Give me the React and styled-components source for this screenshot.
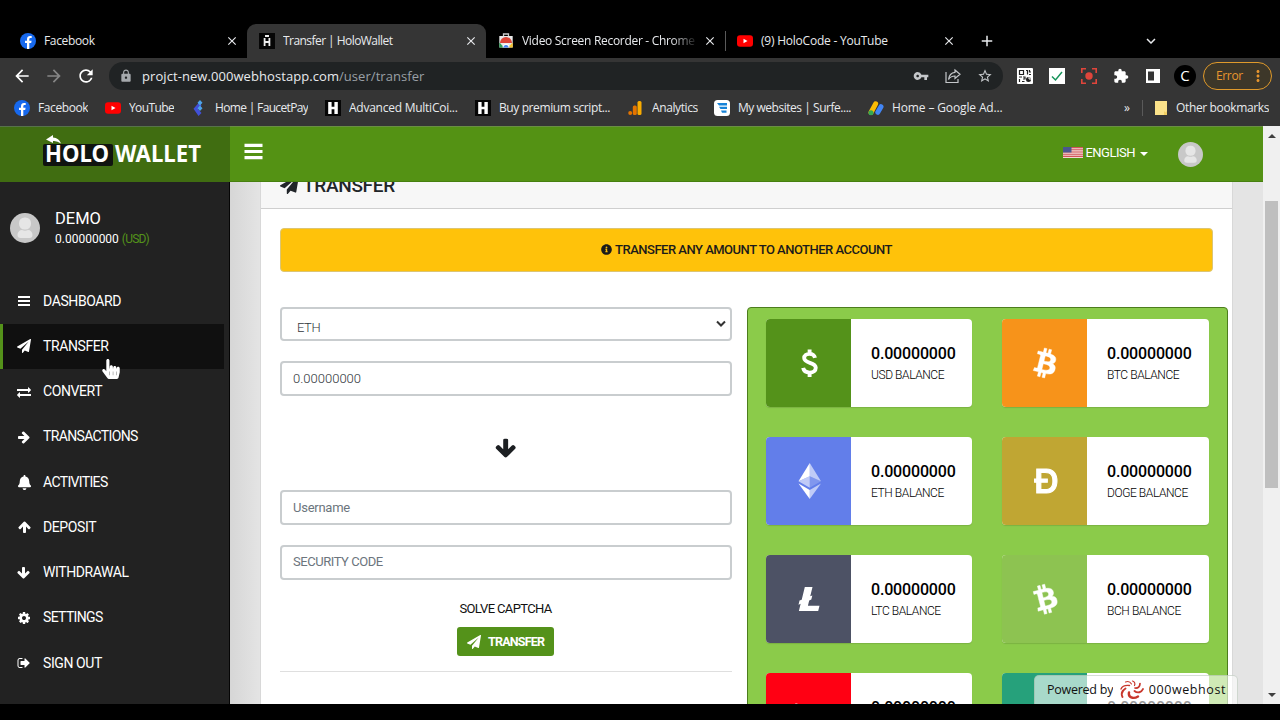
import React from 'react';
import styled, { createGlobalStyle } from 'styled-components';
import { FaBell, FaInfoCircle, FaHandPointer } from 'react-icons/fa';
import {
  MdArrowBack, MdArrowForward, MdRefresh, MdLock, MdVpnKey, MdStarOutline,
  MdExtension, MdClose, MdAdd, MdKeyboardArrowDown, MdMoreVert,
} from 'react-icons/md';

const GlobalStyle = createGlobalStyle`
  * { box-sizing: border-box; }
  body { margin: 0; background: #000; overflow: hidden; }
  svg { display: block; flex: none; }
`;

const ui = '"Open Sans", "Noto Sans", sans-serif';
const site = 'Roboto, "Liberation Sans", sans-serif';

const Screen = styled.div`
  width: 1280px;
  height: 720px;
  background: #000;
  display: flex;
  flex-direction: column;
  overflow: hidden;
  position: relative;
`;

/* ---------- browser ---------- */
const TabStrip = styled.div`
  height: 58px;
  padding-top: 24px;
  display: flex;
  flex: none;
  color: #e8eaed;
`;
const Tab = styled.div`
  width: ${(p) => p.$w}px;
  height: 34px;
  padding: 0 8px 0 ${(p) => p.$pl || 12}px;
  display: flex;
  align-items: center;
  gap: ${(p) => p.$gap || 8}px;
  border-radius: 9px 9px 0 0;
  background: ${(p) => (p.$active ? '#353535' : 'transparent')};
  font: 12px/16px ${ui};
`;
const Label = styled.span`
  flex: ${(p) => (p.$grow ? 1 : 'none')};
  overflow: hidden;
  white-space: nowrap;
  letter-spacing: ${(p) => p.$ls || 0}px;
  ${(p) => p.$fade && 'mask-image: linear-gradient(90deg, #000 86%, transparent 102%);'}
`;
const Separator = styled.i`
  width: 1px;
  height: ${(p) => p.$h || 20}px;
  margin: ${(p) => p.$m || '7px 0 0'};
  background: #5a5a5a;
  flex: none;
`;
const TabAction = styled.div`
  height: 34px;
  margin-left: ${(p) => p.$ml}px;
  display: flex;
  align-items: center;
`;
const Toolbar = styled.div`
  height: 36px;
  background: #353535;
  display: flex;
  align-items: center;
  flex: none;
  padding: 0 8px 0 12px;
  color: #fff;
`;
const NavButtons = styled.div`
  display: flex;
  gap: 12px;
  width: 97px;
`;
const Address = styled.div`
  width: 894px;
  height: 28px;
  border-radius: 14px;
  background: #202324;
  display: flex;
  align-items: center;
  padding: 0 10px;
  font: 13px/20px ${ui};
  color: #e8eaed;
`;
const UrlHost = styled(Label)`
  margin-left: 9px;
`;
const UrlPath = styled(Label)`
  flex: 1;
  color: #9aa0a6;
`;
const AddressIcons = styled.div`
  display: flex;
  gap: 16px;
  align-items: center;
  color: #c4c7ca;
`;
const Extensions = styled.div`
  display: flex;
  align-items: center;
  gap: 16px;
  margin-left: 14px;
`;
const Profile = styled.span`
  width: 22px;
  height: 22px;
  margin-left: -3px;
  border-radius: 50%;
  background: #000;
  text-align: center;
  font: 15px/21px ${ui};
`;
const ErrorPill = styled.div`
  width: 69px;
  height: 28px;
  margin-left: -9px;
  padding: 0 4px 0 12px;
  border: 1px solid #e09a2b;
  border-radius: 14px;
  background: #3d3729;
  color: #e8962e;
  display: flex;
  align-items: center;
  justify-content: space-between;
  font: 12px/18px ${ui};
  letter-spacing: -0.35px;
`;
const BookmarkBar = styled.div`
  height: 32px;
  padding: 0 0 4px 14px;
  background: #353535;
  display: flex;
  align-items: center;
  flex: none;
  color: #e8eaed;
  font: 12px/18px ${ui};
`;
const Bookmark = styled.div`
  width: ${(p) => p.$w}px;
  display: flex;
  align-items: center;
  gap: 8px;
`;

/* ---------- page ---------- */
const Page = styled.div`
  height: 578px;
  display: flex;
  font-family: ${site};
  overflow: hidden;
  flex: none;
  position: relative;
`;
const Sidebar = styled.aside`
  width: 230px;
  background: #222;
  border-right: 1px solid #050505;
  flex: none;
`;
const Brand = styled.div`
  width: 230px;
  height: 56px;
  padding: 8px 0 0 42px;
  background: #406d11;
  border-top: 1px solid #57724a;
`;
const User = styled.div`
  height: 89px;
  margin-bottom: 7.6px;
  padding: 3px 0 0 10px;
  display: flex;
  gap: 15px;
  align-items: center;
`;
const UserText = styled.div`
  padding-top: 3px;
`;
const UserName = styled.div`
  color: #fff;
  font-size: 16.5px;
  line-height: 20px;
`;
const UserBalance = styled.div`
  color: #fff;
  font-size: 12px;
  line-height: 21px;
`;
const Currency = styled.span`
  color: #54921a;
  letter-spacing: -0.8px;
`;
const Menu = styled.nav`
  height: 408px;
  width: 224px;
  display: flex;
  flex-direction: column;
`;
const MenuItem = styled.a`
  height: 45.25px;
  padding: 0 0 1px 14px;
  border-left: 3px solid ${(p) => (p.$active ? '#54921a' : 'transparent')};
  background: ${(p) => (p.$active ? '#101010' : 'transparent')};
  color: #fff;
  display: flex;
  align-items: center;
  font-size: 14px;
  letter-spacing: ${(p) => p.$ls}px;
`;
const MenuIcon = styled.span`
  width: 26px;
  padding-top: 1px;
`;
const Main = styled.main`
  width: 1033px;
  display: flex;
  flex-direction: column;
`;
const TopBar = styled.header`
  height: 56px;
  border-top: 1px solid #6a8f44;
  border-bottom: 1px solid #47800f;
  background: #549214;
  color: #fff;
  display: flex;
  align-items: center;
  padding: 0 60px 0 13px;
  flex: none;
`;
const Burger = styled.div`
  flex: 1;
  padding-bottom: 5px;
`;
const Language = styled.div`
  display: flex;
  align-items: center;
  gap: 2px;
  margin-right: 30px;
  padding-bottom: 3px;
  font-size: 13px;
  letter-spacing: -0.5px;
`;
const Caret = styled.i`
  border: 4px solid transparent;
  border-top-color: #fff;
  border-bottom: 0;
  margin: 3px 0 0 3px;
`;
const Body = styled.div`
  height: 522px;
  padding-left: 30px;
  background: linear-gradient(90deg, #d6d6d6 0, #e4e4e4 30px, #e4e4e4 100%);
`;
const Card = styled.section`
  width: 973px;
  height: 522px;
  background: #fff;
  border: solid #d8d8d8;
  border-width: 0 1px;
`;
const CardTitle = styled.h4`
  height: 27px;
  margin: 0;
  padding-left: 19px;
  background: #f7f7f7;
  border-bottom: 1px solid #cfcfcf;
  display: flex;
  gap: 4px;
  overflow: hidden;
  color: #212529;
  font-size: 19px;
  line-height: 8px;
  font-weight: 500;
  letter-spacing: -0.3px;

  svg { margin-top: -7px; }
`;
const Alert = styled.div`
  height: 44px;
  margin: 19px 19px 0;
  padding-bottom: 2px;
  border: 1px solid #dcc573;
  border-radius: 4px;
  background: #ffc20a;
  color: #1b1b1b;
  display: flex;
  align-items: center;
  justify-content: center;
  gap: 3px;
  font-size: 13px;
  font-weight: 500;
  letter-spacing: -0.5px;
`;
const Columns = styled.div`
  display: flex;
  gap: 15px;
  padding: 35px 0 0 19px;
`;
const Form = styled.form`
  width: 452px;
  display: flex;
  flex-direction: column;
  align-items: center;
`;
const Field = styled.div`
  width: 452px;
  height: ${(p) => p.$h || 35}px;
  margin-top: ${(p) => p.$mt || 0}px;
  padding: ${(p) => p.$p || '0 11px'};
  border: 2px solid #c9cdcf;
  border-radius: 4px;
  display: flex;
  align-items: center;
  justify-content: space-between;
  color: ${(p) => (p.$placeholder ? '#6c757d' : '#30363b')};
  font-size: 13px;
  font-weight: ${(p) => (p.$placeholder ? 400 : 300)};
  letter-spacing: ${(p) => p.$ls || 0}px;
`;
const SelectArrow = styled.svg`
  margin-bottom: 5px;
`;
const ArrowHolder = styled.div`
  padding: 41px 0 30px;
  color: #1c1f22;
`;
const Captcha = styled.div`
  margin: 20px 1px 0 0;
  font-size: 13px;
  line-height: 18px;
  color: #111;
  letter-spacing: -0.65px;
`;
const Submit = styled.button`
  width: 97px;
  height: 29px;
  margin: 9px 1px 0 0;
  padding: 0 0 0 10px;
  border: 0;
  border-radius: 3px;
  background: #54921a;
  color: #fff;
  display: flex;
  align-items: center;
  gap: 7px;
  font: 700 12.5px ${site};
  letter-spacing: -0.8px;
`;
const Rule = styled.hr`
  width: 100%;
  margin: 15px 0 0;
  border: 0;
  border-top: 1px solid #dfdfdf;
`;
const Wallets = styled.div`
  width: 481px;
  height: 520px;
  padding: 11px 18px;
  border: 1px solid #4c7d1d;
  border-radius: 4px 4px 0 0;
  background: #8bcb4a;
  display: grid;
  grid-template-columns: 206px 207px;
  grid-auto-rows: 88px;
  gap: 30px;
`;
const Wallet = styled.div`
  border-radius: 4px;
  background: #fff;
  overflow: hidden;
  display: flex;
  box-shadow: 0 1px 1px rgba(0, 0, 0, 0.12);
`;
const Coin = styled.div`
  width: 85px;
  background: ${(p) => p.$bg};
  display: flex;
  align-items: center;
  justify-content: center;
`;
const Amount = styled.div`
  padding: 25px 0 0 20px;
  color: #000;
`;
const Value = styled.div`
  font-size: 16px;
  line-height: 20px;
  font-weight: 500;
  letter-spacing: -0.17px;
`;
const Name = styled.div`
  font-size: 12px;
  line-height: 22px;
  font-weight: 300;
  letter-spacing: -0.42px;
`;
const ScrollBar = styled.div`
  width: 17px;
  background: #f0f0f0;
  display: flex;
  flex-direction: column;
  align-items: center;
  padding: 8px 0 7px;
`;
const Thumb = styled.div`
  width: 13px;
  height: 287px;
  margin: 63px 0 auto;
  background: #bfbfbf;
`;
const ScrollArrow = styled.i`
  border: 4px solid transparent;
  border-${(p) => (p.$up ? 'bottom' : 'top')}-color: #404040;
  border-${(p) => (p.$up ? 'top' : 'bottom')}: 0;
`;
const HostBadge = styled.div`
  position: absolute;
  right: 42px;
  bottom: 0;
  width: 204px;
  height: 29px;
  padding-left: 12px;
  border: 1px solid rgba(150, 170, 150, 0.4);
  border-bottom: 0;
  border-radius: 5px 5px 0 0;
  background: rgba(255, 255, 255, 0.6);
  color: #111;
  display: flex;
  align-items: center;
  font: 12.5px/20px ${ui};
`;
const HostName = styled(Label)`
  margin-left: 5px;
  font-weight: 500;
`;
const Pointer = styled.div`
  position: absolute;
  left: 101px;
  top: 359px;
  color: #fff;
`;

/* ---------- drawings ---------- */
const glyphs = {
  plane: 'M1764 11q33 24 27 64l-256 1536q-5 29-32 45-14 8-31 8-11 0-24-5l-453-185-242 295q-18 23-49 23-13 0-22-4-19-7-30.5-23.5t-11.5-36.5v-349l864-1059-1069 925-395-162q-37-14-40-55-2-40 32-59l1664-960q15-9 32-9 20 0 36 11z',
  bars: 'M1664 1280v270h-1536v-270zm0-519v270h-1536v-270zm0-519v270h-1536v-270z',
  exchange: 'M1792 1184v192q0 13-9.5 22.5t-22.5 9.5h-1376v192q0 13-9.5 22.5t-22.5 9.5q-12 0-24-10l-319-320q-9-9-9-22 0-14 9-23l320-320q9-9 23-9 13 0 22.5 9.5t9.5 22.5v192h1376q13 0 22.5 9.5t9.5 22.5zm0-544q0 14-9 23l-320 320q-9 9-23 9-13 0-22.5-9.5t-9.5-22.5v-192h-1376q-13 0-22.5-9.5t-9.5-22.5v-192q0-13 9.5-22.5t22.5-9.5h1376v-192q0-14 9-23t23-9q12 0 24 10l319 319q9 9 9 23z',
  arrow: 'M1600 960q0 54-37 91l-651 651q-39 37-91 37-51 0-90-37l-75-75q-38-38-38-91t38-91l293-293h-704q-52 0-84.5-37.5t-32.5-90.5v-128q0-53 32.5-90.5t84.5-37.5h704l-293-294q-38-36-38-90t38-90l75-75q38-38 90-38 53 0 91 38l651 651q37 35 37 90z',
  cog: 'M1152 896q0-106-75-181t-181-75-181 75-75 181 75 181 181 75 181-75 75-181zm512-109v222q0 12-8 23t-20 13l-185 28q-19 54-39 91 35 50 107 138 10 12 10 25t-9 23q-27 37-99 108t-94 71q-12 0-26-9l-138-108q-44 23-91 38-16 136-29 186-7 28-36 28h-222q-14 0-24.5-8.5t-11.5-21.5l-28-184q-49-16-90-37l-141 107q-10 9-25 9-14 0-25-11-126-114-165-168-7-10-7-23 0-12 8-23 15-21 51-66.5t54-70.5q-27-50-41-99l-183-27q-13-2-21-12.5t-8-23.5v-222q0-12 8-23t19-13l186-28q14-46 39-92-40-57-107-138-10-12-10-24 0-10 9-23 26-36 98.5-107.5t94.5-71.5q13 0 26 10l138 107q44-23 91-38 16-136 29-186 7-28 36-28h222q14 0 24.5 8.5t11.5 21.5l28 184q49 16 90 37l142-107q9-9 24-9 13 0 25 10 129 119 165 170 7 8 7 22 0 12-8 23-15 21-51 66.5t-54 70.5q26 50 41 98l183 28q13 2 21 12.5t8 23.5z',
  exit: 'M704 1440q0 4 1 20t.5 26.5-3 23.5-10 19.5-20.5 6.5h-320q-119 0-203.5-84.5t-84.5-203.5v-704q0-119 84.5-203.5t203.5-84.5h320q13 0 22.5 9.5t9.5 22.5q0 4 1 20t.5 26.5-3 23.5-10 19.5-20.5 6.5h-320q-66 0-113 47t-47 113v704q0 66 47 113t113 47h312l11.5 1 11.5 3 8 5.5 7 9 2 13.5zm928-544q0 26-19 45l-544 544q-19 19-45 19t-45-19-19-45v-288h-448q-26 0-45-19t-19-45v-384q0-26 19-45t45-19h448v-288q0-26 19-45t45-19 45 19l544 544q19 19 19 45z',
};
const Glyph = ({ name, size = 14, turn = 0 }) => (
  <svg width={size} height={size} viewBox="0 0 1792 1792" fill="currentColor">
    <path d={glyphs[name]} transform={`rotate(${turn} 896 896)`} />
  </svg>
);

const FacebookIcon = () => (
  <svg width="16" height="16" viewBox="0 0 16 16">
    <circle cx="8" cy="8" r="8" fill="#1769ee" />
    <path d="M7 16V10H5V7.700h2V6.200C7 4 8.200 2.900 10 2.900l1.700.150V5h-1.100C9.600 5 9.300 5.600 9.300 6.300v1.400h2.300L11.200 10H9.300v6z" fill="#fff" />
  </svg>
);
const YouTubeIcon = () => (
  <svg width="16" height="16" viewBox="0 0 16 16">
    <rect y="2.300" width="16" height="11.400" rx="3" fill="#f00" />
    <path d="M6.500 5.700v4.600L10.500 8z" fill="#fff" />
  </svg>
);
const HIcon = ({ small }) => (
  <svg width="16" height="16" viewBox="0 0 16 16">
    <rect width="16" height="16" fill="#060606" />
    {small
      ? <path d="M5.600 5v8M10.400 5v8M5.600 9h4.800M6 3h4" stroke="#eee" strokeWidth="1.800" fill="none" />
      : <path d="M3.200 2h3.400v4.700h2.800V2h3.400v12H9.400V9.300H6.600V14H3.200z" fill="#fff" />}
  </svg>
);
const StoreIcon = () => (
  <svg width="16" height="16" viewBox="0 0 16 16">
    <path d="M5.500 3V1h5v2" stroke="#ccc" fill="none" strokeWidth="1.300" />
    <path d="M1.300 3h13.400v11.500H1.300z" fill="#e9e9e9" />
    <path d="M2 10a6 6 0 0 1 12 0z" fill="#db4437" />
    <path d="M2 10l4 4.500H1.300V10z" fill="#2d9d56" />
    <path d="M14 10l-4 4.500h4.700V10z" fill="#f4c430" />
    <path d="M4.500 14.500a3.500 3.500 0 0 1 7 0z" fill="#fff" /><path d="M5.500 14.500a2.500 2.500 0 0 1 5 0z" fill="#4285f4" />
  </svg>
);
const FaucetIcon = () => (
  <svg width="16" height="16" viewBox="0 0 16 16">
    <path d="M8 2.500 10.500 5.500 7 9l3.500 4-3 3L2.500 8.700z" fill="#4150d8" />
    <path d="M9 0l2.500 2.800L9 5.600 6.500 2.800zM9 5.500l2.500 2.800L9 11 6.500 8.300z" fill="#4da3ea" />
  </svg>
);
const AnalyticsIcon = () => (
  <svg width="16" height="16" viewBox="0 0 16 16">
    <rect x="9.500" y="1" width="4" height="14" rx="1.500" fill="#f9ab00" />
    <rect x="4.800" y="5.500" width="4" height="9.500" rx="1.500" fill="#e37400" />
    <circle cx="2.200" cy="13" r="2" fill="#e37400" />
  </svg>
);
const SurfeIcon = () => (
  <svg width="16" height="16" viewBox="0 0 16 16">
    <rect width="16" height="16" rx="3.500" fill="#fff" />
    <path d="M3 3h10v2.400H5zM5 6.700h8v2.400H6.500zM7 10.400h5.500v2.400H8z" fill="#1683d8" />
  </svg>
);
const AdsIcon = () => (
  <svg width="16" height="16" viewBox="0 0 16 16" strokeLinecap="round" strokeWidth="5">
    <path d="M3 12.500 7.600 3.800" stroke="#fbbc04" />
    <path d="M9.800 12.300 13 6.700" stroke="#4285f4" />
    <circle cx="3" cy="12.800" r="2.500" fill="#34a853" />
  </svg>
);
const ShareIcon = () => (
  <svg width="16" height="16" viewBox="0 0 16 16" fill="none" stroke="currentColor" strokeWidth="1.200">
    <path d="M1 4v10.500h12V11" />
    <path d="M10 2l5 4.300-5 4.200V8C7 8 5 9 3.500 11.500 4 7.500 6 4.700 10 4.300z" />
  </svg>
);
const QrIcon = () => (
  <svg width="16" height="16" viewBox="0 0 16 16">
    <rect width="16" height="16" rx="1" fill="#fff" />
    <path d="M2.500 2.500h4v4h-4zM9 2.500h1.500v4M12.500 2v2h1.500M12 6.500h2M2 9h3M6 9h2v2H6M2.500 11v3M5 13.500h2.500" stroke="#222" fill="none" strokeWidth="1.200" />
    <circle cx="11.500" cy="11.500" r="2.500" fill="#222" /><path d="M12 8.500v2.500h3" stroke="#fff" fill="none" />
  </svg>
);
const CheckIcon = () => (
  <svg width="16" height="16" viewBox="0 0 16 16">
    <rect width="16" height="16" fill="#fff" />
    <path d="M3 8.500 6.500 12 13 4" fill="none" stroke="#16935a" strokeWidth="1.500" />
  </svg>
);
const RecordIcon = () => (
  <svg width="16" height="16" viewBox="0 0 16 16">
    <path d="M.8 5V.8h4.200M11 .8h4.200V5M15.200 11v4.200H11M5 15.200H.8V11" fill="none" stroke="#e0453b" strokeWidth="1.600" />
    <circle cx="8" cy="8" r="3.700" fill="#e0453b" />
  </svg>
);
const PanelIcon = () => (
  <svg width="16" height="16" viewBox="0 0 16 16">
    <path d="M1 1h14v14H1z" fill="#fff" /><path d="M3 3.500h6v9H3z" fill="#353535" />
  </svg>
);
const FolderIcon = () => (
  <svg width="13" height="14" viewBox="0 0 13 14">
    <path d="M0 0h12v14H0z" fill="#fbe28a" /><path d="M9 14v-4l1.500 1.500L12 10v4z" fill="#f2cf63" />
  </svg>
);
const Avatar = ({ size }) => (
  <svg width={size} height={size} viewBox="0 0 30 30">
    <circle cx="15" cy="15" r="15" fill="#c8c8c8" />
    <rect x="9" y="4.500" width="12" height="12" rx="5.500" fill="#e6e6e6" />
    <path d="M7.500 22c0-3 2-5 4.500-5 2 1 4 1 6 0 2.500 0 4.500 2 4.500 5 0 2-1 3-3 3h-9c-2 0-3-1-3-3z" fill="#e6e6e6" />
  </svg>
);
const Logo = () => (
  <svg width="162" height="34" viewBox="0 0 162 34" fontFamily='"Noto Sans", sans-serif' fontWeight="700" fill="#fff">
    <rect x="1" y="9" width="70" height="22" rx="2" fill="#101410" />
    <path d="M4 4.500 11 0v2.500q6 .5 8 6-4-3-8-2.500v2z" />
    <text x="3" y="27" fontSize="24" textLength="64" lengthAdjust="spacingAndGlyphs">HOLO</text>
    <text x="73" y="27" fontSize="24" textLength="86" lengthAdjust="spacingAndGlyphs">WALLET</text>
  </svg>
);
const Flag = () => (
  <svg width="20" height="11" viewBox="0 0 20 11">
    <path d="M0 0h20v11H0z" fill="#f3d7d4" />
    <path d="M0 .6h20M0 2.800h20M0 5h20M0 7.200h20M0 9.400h20" stroke="#d0545a" strokeWidth="1.100" />
    <path d="M0 0h8.500v5.500H0z" fill="#4a5690" />
  </svg>
);
const HostLogo = () => (
  <svg width="24" height="20" viewBox="0 0 24 20" fill="none" stroke="#c8372c" strokeLinecap="round">
    <path d="M9 12.500c-1 4.500 4 7 9 4" strokeWidth="2.400" />
    <path d="M5.500 8.500C1.500 11 1 14 2.500 17" strokeWidth="1.800" />
    <path d="M9.500 5.500C5 5 2 6.500 1 9" strokeWidth="1.400" />
    <path d="M11.500 4C10 1.500 8 1 5.500 2" strokeWidth="1.100" />
    <path d="M14.500 5.500c1-2 0-4-2-4.500" strokeWidth="1.200" />
    <path d="M15 8c3 .5 5-1.500 5-4.500" strokeWidth="1.700" />
    <path d="M14.500 11c3 2.500 7 1.500 8.500-2" strokeWidth="1.900" />
  </svg>
);

const btcPath = 'M23.189 14.02c.314-2.096-1.283-3.223-3.465-3.975l.708-2.84-1.728-.43-.69 2.765c-.454-.114-.92-.22-1.385-.326l.695-2.783L15.596 6l-.708 2.839c-.376-.086-.746-.17-1.104-.26l.002-.009-2.384-.595-.46 1.846s1.283.294 1.256.312c.7.175.826.638.805 1.006l-.806 3.235c.048.012.11.03.18.057l-.183-.045-1.13 4.532c-.086.212-.303.531-.793.41.018.025-1.256-.313-1.256-.313l-.858 1.978 2.25.561c.418.105.828.215 1.231.318l-.715 2.872 1.727.43.708-2.84c.472.127.93.245 1.378.357l-.706 2.828 1.728.43.715-2.866c2.948.558 5.164.333 6.097-2.333.752-2.146-.037-3.385-1.588-4.192 1.13-.26 1.98-1.003 2.207-2.538zm-3.95 5.538c-.533 2.147-4.148.986-5.32.695l.95-3.805c1.172.293 4.929.872 4.37 3.11zm.535-5.569c-.487 1.953-3.495.96-4.47.717l.86-3.45c.975.243 4.118.696 3.61 2.733z';
const coinArt = {
  USD: <path d="M20 12.600C19.600 10.600 18 9.900 16.300 9.900c-2.100 0-3.500 1.100-3.500 2.800 0 4 7.700 2.300 7.700 6.500 0 2-1.600 3.200-4 3.200-2.300 0-4-.9-4.400-3.100M16.400 7v3M16.400 22.300V25.300" fill="none" stroke="#fff" strokeWidth="2.600" />,
  BTC: <path d={btcPath} stroke="#fff" strokeWidth=".3" />,
  ETH: (
    <g>
      <path d="M16.498 4v8.870l7.497 3.350z" opacity=".6" /><path d="M16.498 4L9 16.220l7.498-3.350z" />
      <path d="M16.498 21.968v6.027L24 17.616z" opacity=".6" /><path d="M16.498 27.995v-6.028L9 17.616z" />
      <path d="M16.498 20.573l7.497-4.353-7.497-3.348z" opacity=".2" /><path d="M9 16.220l7.498 4.353v-7.701z" opacity=".6" />
    </g>
  ),
  DOGE: <path stroke="#fff" strokeWidth=".7" d="M13.248 14.610h4.314v2.286h-4.314v4.818h2.721c1.077 0 1.958-.145 2.644-.437.686-.291 1.224-.694 1.615-1.210a4.400 4.400 0 00.796-1.815 11.400 11.400 0 00.220-2.252 11.400 11.400 0 00-.220-2.252 4.396 4.396 0 00-.796-1.815c-.391-.516-.930-.919-1.615-1.210-.686-.292-1.567-.437-2.644-.437h-2.721v4.325zm-2.766 2.286H9v-2.285h1.482V8h6.549c1.210 0 2.257.210 3.142.627.885.419 1.607.990 2.168 1.715.560.724.977 1.572 1.250 2.543.273.971.409 2.010.409 3.115a11.470 11.470 0 01-.410 3.115c-.272.970-.689 1.819-1.250 2.543-.560.725-1.282 1.296-2.167 1.715-.885.418-1.933.627-3.142.627h-6.549v-7.104z" />,
  LTC: <path d="M10.427 19.214L9 19.768l.688-2.759 1.444-.580L13.213 8h5.129l-1.519 6.196 1.410-.571-.680 2.750-1.427.571-.848 3.483H23L22.127 24H9.252z" />,
  BCH: <path d={btcPath} stroke="#fff" strokeWidth=".3" transform="rotate(-28 16 16)" />,
  TRX: <path d="M8 7.800l12 2.800 3 3-7 12z" fill="none" stroke="#fff" strokeWidth="1.300" />,
  USDT: <path d="M9 9h14v3.300h-5.200v12h-3.600v-12H9z" />,
};
const wallets = [
  ['USD', '#54921a'], ['BTC', '#f7931a'], ['ETH', '#627eea'], ['DOGE', '#c0a633'],
  ['LTC', '#4d5265'], ['BCH', '#8dc351'], ['TRX', '#ff0013'], ['USDT', '#26a17b'],
];
const menu = [
  ['DASHBOARD', <Glyph name="bars" />, -0.4],
  ['TRANSFER', <Glyph name="plane" />, -0.4],
  ['CONVERT', <Glyph name="exchange" />, -0.4],
  ['TRANSACTIONS', <Glyph name="arrow" />, -0.65],
  ['ACTIVITIES', <FaBell size={15} />, -0.65],
  ['DEPOSIT', <Glyph name="arrow" turn={-90} />, -0.4],
  ['WITHDRAWAL', <Glyph name="arrow" turn={90} />, -0.4],
  ['SETTINGS', <Glyph name="cog" />, -0.65],
  ['SIGN OUT', <Glyph name="exit" />, -0.4],
];
const bookmarks = [
  [91, <FacebookIcon />, 'Facebook', -0.4],
  [86, <YouTubeIcon />, 'YouTube', -0.6],
  [134, <FaucetIcon />, 'Home | FaucetPay', -0.66],
  [150, <HIcon />, 'Advanced MultiCoi...', -0.25],
  [153, <HIcon />, 'Buy premium script...', -0.4],
  [86, <AnalyticsIcon />, 'Analytics', -0.4],
  [154, <SurfeIcon />, 'My websites | Surfe....', -0.47],
  [256, <AdsIcon />, 'Home – Google Ad...', -0.13],
];

export default function App() {
  return (
    <Screen>
      <GlobalStyle />
      <TabStrip>
        <Tab $w={247} $pl={20}><FacebookIcon /><Label $grow $ls={-0.35}>Facebook</Label><MdClose size={14} /></Tab>
        <Tab $w={239} $active><HIcon small /><Label $grow $ls={-0.55}>Transfer | HoloWallet</Label><MdClose size={14} /></Tab>
        <Tab $w={239}><StoreIcon /><Label $grow $fade $ls={-0.3}>Video Screen Recorder - Chrome Web</Label><MdClose size={14} /></Tab>
        <Separator />
        <Tab $w={238} $pl={11}><YouTubeIcon /><Label $grow $ls={-0.22}>(9) HoloCode - YouTube</Label><MdClose size={14} /></Tab>
        <TabAction $ml={14}><MdAdd size={18} /></TabAction>
        <TabAction $ml={146}><MdKeyboardArrowDown size={18} /></TabAction>
      </TabStrip>
      <Toolbar>
        <NavButtons><MdArrowBack size={20} /><MdArrowForward size={20} color="#868686" /><MdRefresh size={20} /></NavButtons>
        <Address>
          <MdLock size={14} color="#a5a9ac" />
          <UrlHost $ls={0.07}>projct-new.000webhostapp.com</UrlHost>
          <UrlPath $ls={0.05}>/user/transfer</UrlPath>
          <AddressIcons><MdVpnKey size={16} /><ShareIcon /><MdStarOutline size={16} /></AddressIcons>
        </Address>
        <Extensions>
          <QrIcon /><CheckIcon /><RecordIcon /><MdExtension size={16} /><PanelIcon />
          <Profile>C</Profile>
          <ErrorPill>Error<MdMoreVert size={18} /></ErrorPill>
        </Extensions>
      </Toolbar>
      <BookmarkBar>
        {bookmarks.map(([w, icon, text, ls]) => (
          <Bookmark key={text} $w={w}>{icon}<Label $ls={ls}>{text}</Label></Bookmark>
        ))}
        <Bookmark $w={18}><Label>»</Label></Bookmark>
        <Separator $h={16} $m="0 12px 0 0" />
        <Bookmark $w={120}><FolderIcon /><Label $ls={-0.36}>Other bookmarks</Label></Bookmark>
      </BookmarkBar>

      <Page>
        <Sidebar>
          <Brand><Logo /></Brand>
          <User>
            <Avatar size={30} />
            <UserText>
              <UserName>DEMO</UserName>
              <UserBalance>0.00000000 <Currency>(USD)</Currency></UserBalance>
            </UserText>
          </User>
          <Menu>
            {menu.map(([text, icon, ls]) => (
              <MenuItem key={text} $ls={ls} $active={text === 'TRANSFER'}><MenuIcon>{icon}</MenuIcon>{text}</MenuItem>
            ))}
          </Menu>
        </Sidebar>
        <Main>
          <TopBar>
            <Burger><Glyph name="bars" size={21} /></Burger>
            <Language><Flag />ENGLISH<Caret /></Language>
            <Avatar size={25} />
          </TopBar>
          <Body>
            <Card>
              <CardTitle><Glyph name="plane" size={19} />TRANSFER</CardTitle>
              <Alert><FaInfoCircle size={11} />TRANSFER ANY AMOUNT TO ANOTHER ACCOUNT</Alert>
              <Columns>
                <Form>
                  <Field $h={34} $p="6px 3px 0 15px" $ls={-0.4}>
                    ETH
                    <SelectArrow width="12" height="14" viewBox="0 0 12 14"><path d="M2 3.500l4 4 4-4" fill="none" stroke="#333" strokeWidth="2" /></SelectArrow>
                  </Field>
                  <Field $mt={20}>0.00000000</Field>
                  <ArrowHolder><Glyph name="arrow" size={23} turn={90} /></ArrowHolder>
                  <Field $placeholder $ls={-0.25}>Username</Field>
                  <Field $mt={20} $placeholder $ls={-0.45} $p="0 11px 2px">SECURITY CODE</Field>
                  <Captcha>SOLVE CAPTCHA</Captcha>
                  <Submit type="button"><Glyph name="plane" size={14} />TRANSFER</Submit>
                  <Rule />
                </Form>
                <Wallets>
                  {wallets.map(([code, bg]) => (
                    <Wallet key={code}>
                      <Coin $bg={bg}><svg width="48" height="48" viewBox="0 0 32 32" fill="#fff">{coinArt[code]}</svg></Coin>
                      <Amount><Value>0.00000000</Value><Name>{code} BALANCE</Name></Amount>
                    </Wallet>
                  ))}
                </Wallets>
              </Columns>
            </Card>
          </Body>
        </Main>
        <ScrollBar><ScrollArrow $up /><Thumb /><ScrollArrow /></ScrollBar>
        <HostBadge><Label $ls={-0.25}>Powered by</Label>&nbsp;&nbsp;<HostLogo /><HostName $ls={0.6}>000webhost</HostName></HostBadge>
      </Page>
      <Pointer><FaHandPointer size={20} /></Pointer>
    </Screen>
  );
}
